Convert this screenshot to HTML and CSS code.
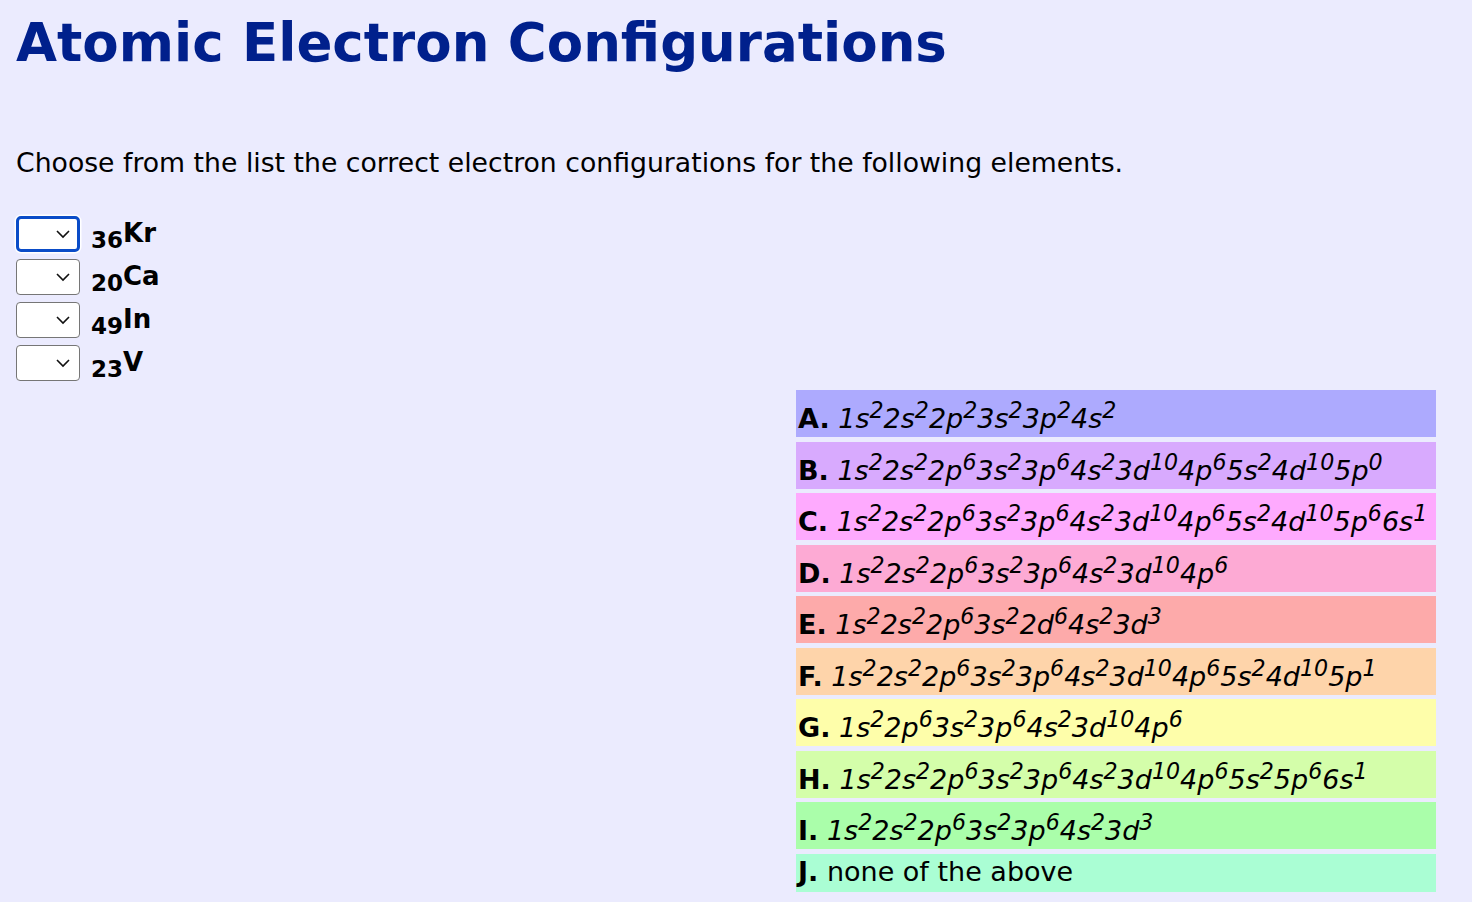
FILE: index.html
```html
<!DOCTYPE html>
<html lang="en">
<head>
<meta charset="utf-8">
<title>Atomic Electron Configurations</title>
<link rel="stylesheet" href="styles.css">
</head>
<body>
<h1 class="title">Atomic Electron Configurations</h1>
<p class="intro">Choose from the list the correct electron configurations for the following elements.</p>

<div class="questions">
  <div class="q">
    <span class="pick active">
      <select aria-label="36Kr"><option></option><option>A</option><option>B</option><option>C</option><option>D</option><option>E</option><option>F</option><option>G</option><option>H</option><option>I</option><option>J</option></select>
      <svg class="chev" width="16" height="10" viewBox="0 0 16 10"><path d="M2 2 L8 8 L14 2" fill="none" stroke="#111" stroke-width="1.6"/></svg>
    </span>
    <span class="el"><span class="z">36</span><span class="sym">Kr</span></span>
  </div>
  <div class="q">
    <span class="pick">
      <select aria-label="20Ca"><option></option><option>A</option><option>B</option><option>C</option><option>D</option><option>E</option><option>F</option><option>G</option><option>H</option><option>I</option><option>J</option></select>
      <svg class="chev" width="16" height="10" viewBox="0 0 16 10"><path d="M2 2 L8 8 L14 2" fill="none" stroke="#111" stroke-width="1.6"/></svg>
    </span>
    <span class="el"><span class="z">20</span><span class="sym">Ca</span></span>
  </div>
  <div class="q">
    <span class="pick">
      <select aria-label="49In"><option></option><option>A</option><option>B</option><option>C</option><option>D</option><option>E</option><option>F</option><option>G</option><option>H</option><option>I</option><option>J</option></select>
      <svg class="chev" width="16" height="10" viewBox="0 0 16 10"><path d="M2 2 L8 8 L14 2" fill="none" stroke="#111" stroke-width="1.6"/></svg>
    </span>
    <span class="el"><span class="z">49</span><span class="sym">In</span></span>
  </div>
  <div class="q">
    <span class="pick">
      <select aria-label="23V"><option></option><option>A</option><option>B</option><option>C</option><option>D</option><option>E</option><option>F</option><option>G</option><option>H</option><option>I</option><option>J</option></select>
      <svg class="chev" width="16" height="10" viewBox="0 0 16 10"><path d="M2 2 L8 8 L14 2" fill="none" stroke="#111" stroke-width="1.6"/></svg>
    </span>
    <span class="el"><span class="z">23</span><span class="sym">V</span></span>
  </div>
</div>

<ol class="options">
  <li class="opt c-a"><b>A.</b> <i>1s<sup>2</sup>2s<sup>2</sup>2p<sup>2</sup>3s<sup>2</sup>3p<sup>2</sup>4s<sup>2</sup></i></li>
  <li class="opt c-b"><b>B.</b> <i>1s<sup>2</sup>2s<sup>2</sup>2p<sup>6</sup>3s<sup>2</sup>3p<sup>6</sup>4s<sup>2</sup>3d<sup>10</sup>4p<sup>6</sup>5s<sup>2</sup>4d<sup>10</sup>5p<sup>0</sup></i></li>
  <li class="opt c-c"><b>C.</b> <i>1s<sup>2</sup>2s<sup>2</sup>2p<sup>6</sup>3s<sup>2</sup>3p<sup>6</sup>4s<sup>2</sup>3d<sup>10</sup>4p<sup>6</sup>5s<sup>2</sup>4d<sup>10</sup>5p<sup>6</sup>6s<sup>1</sup></i></li>
  <li class="opt c-d"><b>D.</b> <i>1s<sup>2</sup>2s<sup>2</sup>2p<sup>6</sup>3s<sup>2</sup>3p<sup>6</sup>4s<sup>2</sup>3d<sup>10</sup>4p<sup>6</sup></i></li>
  <li class="opt c-e"><b>E.</b> <i>1s<sup>2</sup>2s<sup>2</sup>2p<sup>6</sup>3s<sup>2</sup>2d<sup>6</sup>4s<sup>2</sup>3d<sup>3</sup></i></li>
  <li class="opt c-f"><b>F.</b> <i>1s<sup>2</sup>2s<sup>2</sup>2p<sup>6</sup>3s<sup>2</sup>3p<sup>6</sup>4s<sup>2</sup>3d<sup>10</sup>4p<sup>6</sup>5s<sup>2</sup>4d<sup>10</sup>5p<sup>1</sup></i></li>
  <li class="opt c-g"><b>G.</b> <i>1s<sup>2</sup>2p<sup>6</sup>3s<sup>2</sup>3p<sup>6</sup>4s<sup>2</sup>3d<sup>10</sup>4p<sup>6</sup></i></li>
  <li class="opt c-h"><b>H.</b> <i>1s<sup>2</sup>2s<sup>2</sup>2p<sup>6</sup>3s<sup>2</sup>3p<sup>6</sup>4s<sup>2</sup>3d<sup>10</sup>4p<sup>6</sup>5s<sup>2</sup>5p<sup>6</sup>6s<sup>1</sup></i></li>
  <li class="opt c-i"><b>I.</b> <i>1s<sup>2</sup>2s<sup>2</sup>2p<sup>6</sup>3s<sup>2</sup>3p<sup>6</sup>4s<sup>2</sup>3d<sup>3</sup></i></li>
  <li class="opt c-j plain"><b>J.</b> none of the above</li>
</ol>
</body>
</html>
```

FILE: styles.css
```css
html, body {
  margin: 0;
  padding: 0;
}

body {
  background: #ebebfe;
  color: #000;
  font-family: "DejaVu Sans", "Liberation Sans", sans-serif;
  padding: 0 16px;
  overflow: hidden;
}

.title {
  margin: 0;
  padding-top: 10px;
  font-size: 53px;
  line-height: 66px;
  font-weight: bold;
  color: #00208c;
}

.intro {
  margin: 71px 0 0;
  font-size: 26.7px;
  line-height: 32px;
}

/* element rows: dropdown + nuclide label */
.questions {
  margin-top: 37px;
  display: flex;
  flex-direction: column;
  gap: 7px;
}

.q {
  display: flex;
  align-items: flex-start;
  gap: 11px;
  height: 36px;
}

.pick {
  position: relative;
  display: inline-block;
  width: 64px;
  height: 36px;
}

.pick select {
  appearance: none;
  -webkit-appearance: none;
  display: block;
  width: 64px;
  height: 36px;
  margin: 0;
  border: 1px solid #767676;
  border-radius: 4px;
  background: #fff;
  font: inherit;
  color: transparent;
  outline: none;
  box-sizing: border-box;
}

.pick.active select {
  border: 3px solid #0a4cc8;
  border-radius: 5px;
  box-shadow: 0 0 0 1.5px #fff;
}

.chev {
  position: absolute;
  right: 9px;
  top: 13px;
  pointer-events: none;
}

.el {
  display: inline-flex;
  align-items: baseline;
  margin-top: 5px;
  font-weight: bold;
  font-size: 26px;
  line-height: 25px;
}

.el .z {
  font-size: 23px;
  position: relative;
  top: 6px;
}

/* answer key */
.options {
  list-style: none;
  margin: 9px 20px 0 auto;
  padding: 0;
  width: 640px;
  display: flex;
  flex-direction: column;
  gap: 4.5px;
}

.opt {
  font-size: 27px;
  line-height: 32px;
  padding: 13px 2px 2px;
  white-space: nowrap;
}

.opt.plain {
  padding: 2px 2px 4px;
}

.opt sup {
  font-size: 0.82em;
  line-height: 0;
  vertical-align: baseline;
  position: relative;
  top: -10px;
}

.c-a { background: #adaafe; }
.c-b { background: #d8aafe; }
.c-c { background: #feaafe; }
.c-d { background: #fdaad4; }
.c-e { background: #fdaaaa; }
.c-f { background: #fed4aa; }
.c-g { background: #fefeaa; }
.c-h { background: #d4feaa; }
.c-i { background: #aafeaa; }
.c-j { background: #aafed4; }
```
